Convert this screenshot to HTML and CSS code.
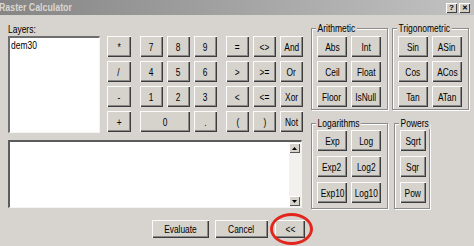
FILE: index.html
```html
<!DOCTYPE html>
<html>
<head>
<meta charset="utf-8">
<link rel="stylesheet" href="styles.css">
</head>
<body>
<div class="window">
  <div class="titlebar">
    <span class="title">Raster Calculator</span>
    <div class="tbtns">
      <span class="tbtn">?</span>
      <span class="tbtn x">&#x2715;</span>
    </div>
  </div>
  <div class="main">
    <div class="left">
      <div class="top">
        <div class="layers">
          <div class="label"><span class="tl">Layers:</span></div>
          <div class="listbox"><div class="item"><span class="tl">dem30</span></div></div>
        </div>
        <div class="keypad">
          <div class="kcol ops">
            <button class="btn"><span class="t">*</span></button>
            <button class="btn"><span class="t">/</span></button>
            <button class="btn"><span class="t">-</span></button>
            <button class="btn"><span class="t">+</span></button>
          </div>
          <div class="kcol nums">
            <button class="btn"><span class="t">7</span></button>
            <button class="btn"><span class="t">8</span></button>
            <button class="btn"><span class="t">9</span></button>
            <button class="btn"><span class="t">4</span></button>
            <button class="btn"><span class="t">5</span></button>
            <button class="btn"><span class="t">6</span></button>
            <button class="btn"><span class="t">1</span></button>
            <button class="btn"><span class="t">2</span></button>
            <button class="btn"><span class="t">3</span></button>
            <button class="btn span2"><span class="t">0</span></button>
            <button class="btn"><span class="t">.</span></button>
          </div>
          <div class="kcol nums">
            <button class="btn"><span class="t">=</span></button>
            <button class="btn"><span class="t">&lt;&gt;</span></button>
            <button class="btn"><span class="t">And</span></button>
            <button class="btn"><span class="t">&gt;</span></button>
            <button class="btn"><span class="t">&gt;=</span></button>
            <button class="btn"><span class="t">Or</span></button>
            <button class="btn"><span class="t">&lt;</span></button>
            <button class="btn"><span class="t">&lt;=</span></button>
            <button class="btn"><span class="t">Xor</span></button>
            <button class="btn"><span class="t">(</span></button>
            <button class="btn"><span class="t">)</span></button>
            <button class="btn"><span class="t">Not</span></button>
          </div>
        </div>
      </div>
      <div class="expr">
        <div class="exprtext"></div>
        <div class="scroll">
          <span class="sbtn"><svg width="5" height="3" viewBox="0 0 5 3"><path d="M2.5 0 L5 3 L0 3 Z" fill="#000"/></svg></span>
          <span class="track"></span>
          <span class="sbtn"><svg width="5" height="3" viewBox="0 0 5 3"><path d="M0 0 L5 0 L2.5 3 Z" fill="#000"/></svg></span>
        </div>
      </div>
      <div class="actions">
        <button class="btn act eval"><span class="t">Evaluate</span></button>
        <button class="btn act cancel"><span class="t">Cancel</span></button>
        <span class="marked">
          <button class="btn act less"><span class="t">&lt;&lt;</span></button>
          <span class="ring"></span>
        </span>
      </div>
    </div>
    <div class="right">
      <div class="grow first">
        <div class="group">
          <span class="legend">Arithmetic</span>
          <div class="gbtns two">
            <button class="btn"><span class="t">Abs</span></button>
            <button class="btn"><span class="t">Int</span></button>
            <button class="btn"><span class="t">Ceil</span></button>
            <button class="btn"><span class="t">Float</span></button>
            <button class="btn"><span class="t">Floor</span></button>
            <button class="btn"><span class="t">IsNull</span></button>
          </div>
        </div>
        <div class="group">
          <span class="legend">Trigonometric</span>
          <div class="gbtns two">
            <button class="btn"><span class="t">Sin</span></button>
            <button class="btn"><span class="t">ASin</span></button>
            <button class="btn"><span class="t">Cos</span></button>
            <button class="btn"><span class="t">ACos</span></button>
            <button class="btn"><span class="t">Tan</span></button>
            <button class="btn"><span class="t">ATan</span></button>
          </div>
        </div>
      </div>
      <div class="grow second">
        <div class="group low">
          <span class="legend">Logarithms</span>
          <div class="gbtns two">
            <button class="btn"><span class="t">Exp</span></button>
            <button class="btn"><span class="t">Log</span></button>
            <button class="btn"><span class="t">Exp2</span></button>
            <button class="btn"><span class="t">Log2</span></button>
            <button class="btn"><span class="t">Exp10</span></button>
            <button class="btn"><span class="t">Log10</span></button>
          </div>
        </div>
        <div class="group low powers">
          <span class="legend">Powers</span>
          <div class="gbtns one">
            <button class="btn"><span class="t">Sqrt</span></button>
            <button class="btn"><span class="t">Sqr</span></button>
            <button class="btn"><span class="t">Pow</span></button>
          </div>
        </div>
      </div>
    </div>
  </div>
</div>
</body>
</html>
```
FILE: styles.css
```css
* { box-sizing: border-box; }
html, body {
  margin: 0;
  padding: 0;
}
body {
  width: 474px;
  height: 246px;
  overflow: hidden;
  background: #d7d4cf;
  font-family: "Liberation Sans", Arial, sans-serif;
  font-size: 11px;
  color: #000;
}
.window {
  width: 474px;
  height: 246px;
}
.t {
  display: inline-block;
  transform: scaleX(0.76);
  white-space: nowrap;
}
.tl {
  display: inline-block;
  transform: scaleX(0.77);
  transform-origin: left center;
  white-space: nowrap;
}
.titlebar {
  height: 15px;
  background: linear-gradient(to right, #858585, #c2c2c2);
  display: flex;
  align-items: center;
  justify-content: space-between;
}
.title {
  display: inline-block;
  font-weight: bold;
  color: #dad7d1;
  margin-left: -1px;
  font-size: 11px;
  line-height: 13px;
  transform: scaleX(0.8);
  transform-origin: left center;
  white-space: nowrap;
}
.tbtns {
  display: flex;
  gap: 2px;
  margin-right: 4px;
  margin-top: 1px;
}
.tbtn {
  width: 11px;
  height: 10px;
  background: #d4d0c8;
  box-shadow: inset 1px 1px #fff, inset -1px -1px #404040;
  font-weight: bold;
  font-size: 8px;
  line-height: 10px;
  text-align: center;
}
.tbtn.x { font-size: 7px; }
.main {
  display: flex;
  padding-left: 8px;
  gap: 8px;
}
.left {
  width: 295px;
  display: flex;
  flex-direction: column;
}
.top {
  display: flex;
}
.layers {
  width: 92px;
}
.label {
  height: 21px;
  padding-top: 8px;
  line-height: 12px;
}
.listbox {
  height: 97px;
  background: #fff;
  border-top: 2px solid #6e6e6e;
  border-left: 2px solid #6e6e6e;
  border-right: 1px solid #f4f4f4;
  border-bottom: 1px solid #f4f4f4;
  padding: 1px 1px;
}
.item {
  line-height: 12px;
}
.keypad {
  display: flex;
  gap: 9px;
  margin-left: 7px;
  margin-top: 21px;
}
.kcol {
  display: grid;
  grid-auto-rows: 21px;
  row-gap: 4px;
}
.ops { grid-template-columns: 24px; }
.nums { grid-template-columns: repeat(3, 23px); column-gap: 4px; }
.span2 { grid-column: span 2; }
.btn {
  font: inherit;
  color: #000;
  margin: 0;
  padding: 0;
  border: 0;
  background: #d6d3cd;
  box-shadow: inset 1px 1px #fbfbfb, inset -1px -1px #3c3c3c, inset -2px -2px #8a8a8a;
  line-height: 12px;
  text-align: center;
  overflow: visible;
}
.expr {
  margin-top: 7px;
  height: 68px;
  width: 294px;
  display: flex;
  background: #fff;
  border-top: 2px solid #5c5c5c;
  border-left: 2px solid #5c5c5c;
  border-right: 1px solid #f4f4f4;
  border-bottom: 1px solid #f4f4f4;
}
.exprtext { flex: 1; }
.scroll {
  width: 12px;
  display: flex;
  flex-direction: column;
  padding: 1px 1px 1px 0;
  background: #f2f1ee;
}
.sbtn {
  height: 10px;
  background: #d6d3cd;
  box-shadow: inset 1px 1px #fff, inset -1px -1px #555;
  display: flex;
  align-items: center;
  justify-content: center;
}
.track { flex: 1; }
.actions {
  margin-top: 12px;
  display: flex;
  justify-content: flex-end;
  margin-right: -2px;
  gap: 6px;
}
.act { height: 18px; }
.eval { width: 57px; }
.cancel { width: 53px; }
.marked {
  position: relative;
  display: flex;
  margin-left: 1px;
}
.less { width: 30px; }
.ring {
  position: absolute;
  left: -5px;
  top: -7px;
  width: 43px;
  height: 32px;
  border: 3px solid #e2261d;
  border-radius: 50%;
}
.right {
  display: flex;
  flex-direction: column;
  padding-top: 13px;
}
.grow {
  display: flex;
  gap: 4px;
}
.second {
  margin-top: 13px;
}
.group {
  position: relative;
  padding: 7px 6px 2px 5px;
  border: 1px solid #8c8c8c;
  box-shadow: inset 1px 1px #fdfdfd, 1px 1px #fdfdfd;
  width: 77px;
}
.legend {
  position: absolute;
  top: -7px;
  left: 4px;
  padding: 0 2px;
  line-height: 12px;
  background: #d7d4cf;
  display: inline-block;
  transform: scaleX(0.77);
  transform-origin: left center;
  white-space: nowrap;
}
.group.low {
  padding: 6px 6px 5px 5px;
}
.powers {
  width: 36px;
  padding-left: 4px;
  padding-right: 4px;
  margin-left: 2px;
}
.gbtns {
  display: grid;
  grid-auto-rows: 21px;
  row-gap: 4px;
  column-gap: 4px;
}
.low .gbtns { row-gap: 5px; }
.two { grid-template-columns: 30px 30px; }
.one { grid-template-columns: 26px; }
```
